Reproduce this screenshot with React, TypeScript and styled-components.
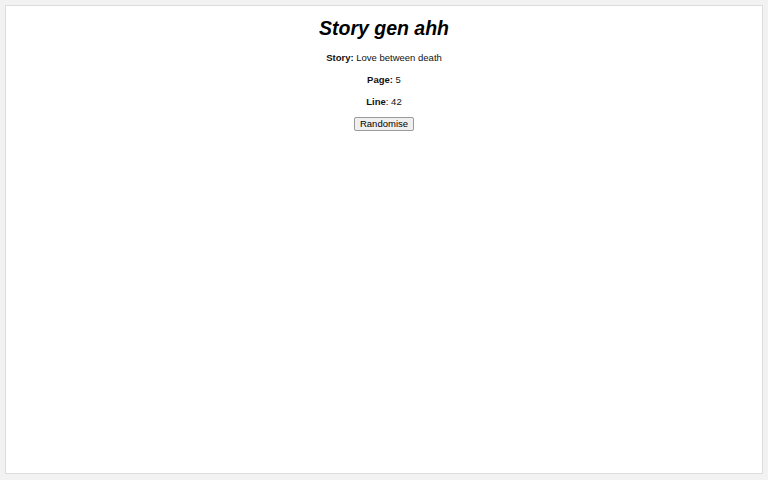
import { createGlobalStyle } from "styled-components";
import styled from "styled-components";

const GlobalStyle = createGlobalStyle`
  html, body {
    margin: 0;
    padding: 0;
    height: 100%;
    background-color: #f2f2f2;
    font-family: "Liberation Sans", Arial, sans-serif;
  }
  #root {
    height: 100%;
  }
`;

const Page = styled.div`
  box-sizing: border-box;
  height: 100%;
  padding: 5px 5px 6px 5px;
  display: flex;
`;

const Card = styled.div`
  flex: 1;
  background-color: #ffffff;
  border: 1px solid #dcdcdc;
  display: flex;
  flex-direction: column;
  align-items: center;
  padding-top: 11px;
`;

const Title = styled.h1`
  margin: 0 0 12px 0;
  font-size: 19.5px;
  line-height: 23px;
  font-style: italic;
  font-weight: bold;
  color: #000;
`;

const Field = styled.p`
  margin: 0 0 11px 0;
  font-size: 9.5px;
  line-height: 11px;
  color: #111;
`;

const Button = styled.button`
  margin-top: -1px;
  font-family: "Liberation Sans", Arial, sans-serif;
  font-size: 9.5px;
  line-height: 10px;
  padding: 1px 5px;
  background-color: #efefef;
  border: 1px solid #9a9a9a;
  border-radius: 2px;
  color: #000;
  cursor: pointer;
`;

export default function App() {
  return (
    <>
      <GlobalStyle />
      <Page>
        <Card>
          <Title>Story gen ahh</Title>
          <Field>
            <b>Story:</b> Love between death
          </Field>
          <Field>
            <b>Page:</b> 5
          </Field>
          <Field>
            <b>Line</b>: 42
          </Field>
          <Button>Randomise</Button>
        </Card>
      </Page>
    </>
  );
}
